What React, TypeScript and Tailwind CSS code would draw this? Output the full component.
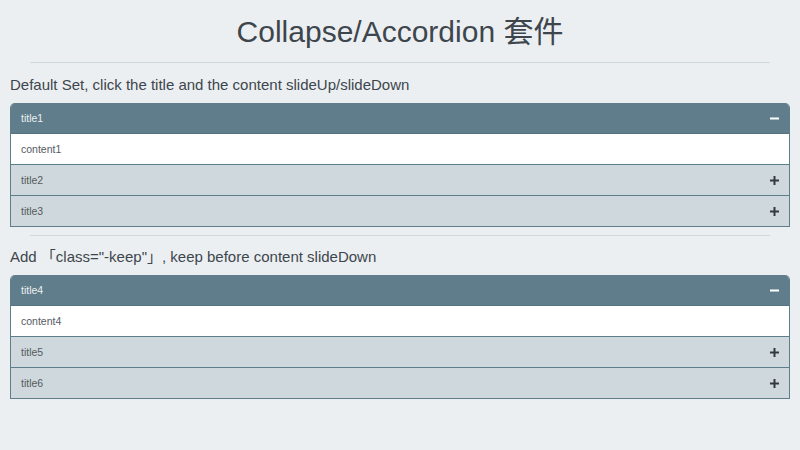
const groups = [
  {
    items: [
      { title: "title1", content: "content1", open: true },
      { title: "title2", content: "content2", open: false },
      { title: "title3", content: "content3", open: false },
    ],
  },
  {
    items: [
      { title: "title4", content: "content4", open: true },
      { title: "title5", content: "content5", open: false },
      { title: "title6", content: "content6", open: false },
    ],
  },
];

function Plus() {
  return (
    <svg width="9" height="9" viewBox="0 0 9 9" className="fill-[#333a3f]">
      <rect x="3.5" y="0" width="2" height="9" />
      <rect x="0" y="3.5" width="9" height="2" />
    </svg>
  );
}

function Minus() {
  return (
    <svg width="9" height="9" viewBox="0 0 9 9" className="fill-white">
      <rect x="0" y="3.5" width="9" height="2" />
    </svg>
  );
}

function Accordion({ items }: { items: { title: string; content: string; open: boolean }[] }) {
  return (
    <div className="rounded-t-[5px] overflow-hidden border-x border-[#607d8b]">
      {items.map((item) => (
        <div key={item.title}>
          <div
            className={
              item.open
                ? "h-[31px] flex items-center justify-between pl-[10px] pr-[10px] pt-[1px] bg-[#607d8b] text-[#eceff1] border-b border-[#56717e] text-[10.5px]"
                : "h-[31px] flex items-center justify-between pl-[10px] pr-[10px] pt-[1px] bg-[#cfd8dc] text-[#555b5f] border-b border-[#607d8b] text-[10.5px]"
            }
          >
            <span>{item.title}</span>
            {item.open ? <Minus /> : <Plus />}
          </div>
          {item.open && (
            <div className="h-[31px] flex items-center pl-[10px] pt-[1px] bg-white text-[#555b5f] border-b border-[#607d8b] text-[10.5px]">
              {item.content}
            </div>
          )}
        </div>
      ))}
    </div>
  );
}

export default function App() {
  return (
    <div className="min-h-[450px] bg-[#eceff1] px-[10px] font-['Liberation_Sans','Noto_Sans_CJK_SC',sans-serif]">
      <h1 className="pt-[14px] text-center text-[30px] leading-[36px] text-[#3d464d]">
        Collapse/Accordion 套件
      </h1>
      <hr className="mt-[12px] mx-[20px] border-t border-[#cfd8dc]" />
      <p className="mt-[12px] text-[15px] leading-[20px] text-[#3d464d]">
        Default Set, click the title and the content slideUp/slideDown
      </p>
      <div className="mt-[8px]">
        <Accordion items={groups[0].items} />
      </div>
      <hr className="mt-[8px] mx-[20px] border-t border-[#cfd8dc]" />
      <p className="mt-[11px] text-[15px] leading-[20px] text-[#3d464d]">
        Add 「class="-keep"」, keep before content slideDown
      </p>
      <div className="mt-[8px]">
        <Accordion items={groups[1].items} />
      </div>
    </div>
  );
}
